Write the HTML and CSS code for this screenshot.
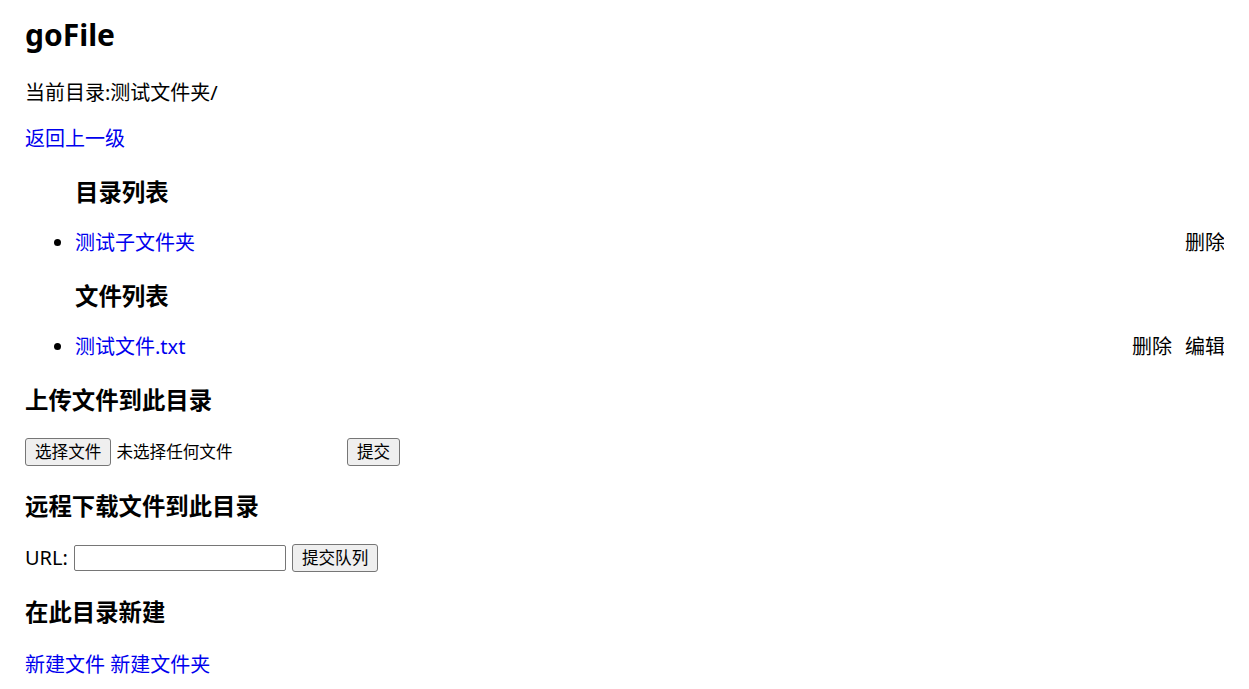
FILE: index.html
```html
<!DOCTYPE html>
<html lang="zh-CN">
<head>
    <meta charset="UTF-8">
    <title>goFile</title>
    <link rel="stylesheet" href="styles.css">
</head>
<body>

<h1>goFile</h1>
<p>当前目录:测试文件夹/</p>
<p><a href="#">返回上一级</a></p>

<ul class="entries">
    <h3>目录列表</h3>
    <li>
        <a href="#">测试子文件夹</a>
        <span class="actions"><a class="action" href="#">删除</a></span>
    </li>
</ul>

<ul class="entries">
    <h3>文件列表</h3>
    <li>
        <a href="#">测试文件.txt</a>
        <span class="actions"><a class="action" href="#">删除</a><a class="action" href="#">编辑</a></span>
    </li>
</ul>

<h3>上传文件到此目录</h3>
<form class="row" action="#" method="post">
    <label class="file-pick">
        <input type="file" name="file" hidden>
        <span class="btn">选择文件</span>
        <span class="file-name">未选择任何文件</span>
    </label>
    <button class="btn" type="submit">提交</button>
</form>

<h3>远程下载文件到此目录</h3>
<form class="row row-last" action="#" method="post">
    <span class="label">URL:</span>
    <input type="text" class="url" name="url">
    <button class="btn" type="submit">提交队列</button>
</form>

<h3>在此目录新建</h3>
<p class="new-links"><a href="#">新建文件</a> <a href="#">新建文件夹</a></p>

</body>
</html>
```

FILE: styles.css
```css
body {
    margin: 0 25px;
    font-family: "Noto Sans", "Noto Sans CJK SC", sans-serif;
    font-size: 20px;
    line-height: 26px;
    color: #000;
    background: #fff;
}

h1 {
    font-size: 30px;
    line-height: 40px;
    margin: 15px 0 25px;
}

p {
    margin: 20px 0;
}

a {
    color: #0000ee;
    text-decoration: none;
}

h3 {
    font-size: 23.4px;
    line-height: 30px;
    margin: 25px 0 23px;
}

.entries {
    margin: 20px 0;
    padding-left: 50px;
}

.entries li {
    line-height: 26px;
}

.actions {
    float: right;
    margin-right: -1px;
}

.action {
    color: #000;
    margin-left: 13px;
}

.row {
    display: flex;
    align-items: center;
    height: 28px;
    margin: 0;
}

.row-last {
    margin-bottom: 1px;
}

.new-links {
    margin-top: 25px;
}

.btn {
    display: inline-block;
    box-sizing: border-box;
    height: 28px;
    padding: 0 9px;
    font-family: inherit;
    font-size: 16.6px;
    line-height: 26px;
    color: #000;
    background: #efefef;
    border: 1px solid #767676;
    border-radius: 3px;
}

.file-pick {
    display: flex;
    align-items: center;
    width: 317px;
    margin-right: 5px;
}

.file-name {
    margin-left: 5px;
    font-size: 16.6px;
}

.label {
    margin-right: 6px;
}

.url {
    box-sizing: border-box;
    width: 212px;
    height: 26px;
    margin: 0 6px 0 0;
    padding: 0 3px;
    border: 1px solid #767676;
    border-radius: 2px;
    font-size: 16.6px;
}
```
